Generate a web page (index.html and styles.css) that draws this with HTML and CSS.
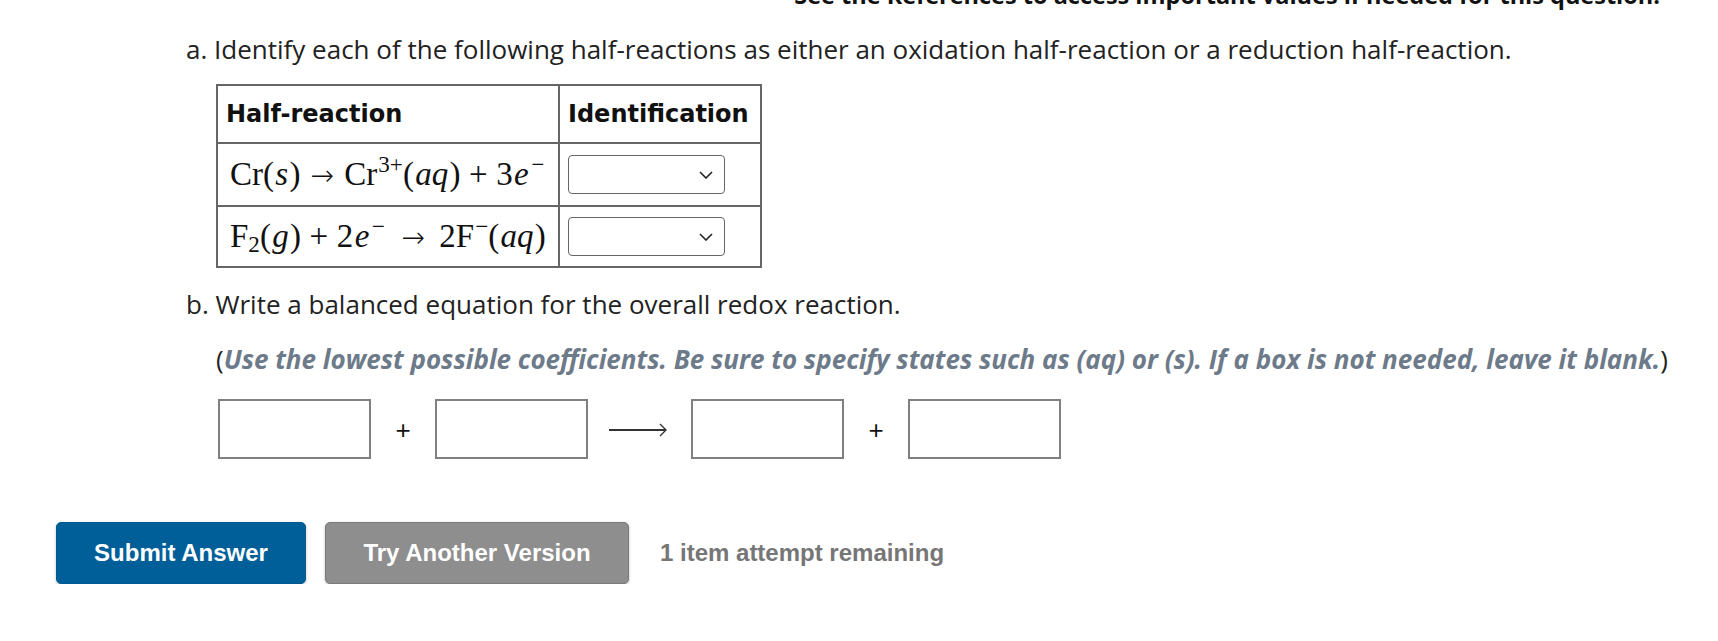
FILE: index.html
```html
<!DOCTYPE html>
<html lang="en">
<head>
<meta charset="utf-8">
<title>Redox question</title>
<link rel="stylesheet" href="styles.css">
</head>
<body>
<div class="refs">See the References to access important values if needed for this question.</div>
<div class="question">
  <p class="qtext">a. Identify each of the following half-reactions as either an oxidation half-reaction or a reduction half-reaction.</p>
  <table class="hr">
    <thead>
      <tr class="row-head"><th class="c1">Half-reaction</th><th class="c2">Identification</th></tr>
    </thead>
    <tbody>
      <tr class="row-1">
        <td class="c1 math">Cr(<i>s</i>)<span class="rel">→</span>Cr<sup>3+</sup>(<i>aq</i>)<span class="bin">+</span>3<i>e</i><sup>−</sup></td>
        <td class="c2"><div class="sel"><svg class="chev" width="14" height="8" viewBox="0 0 14 8"><path d="M1 1 L7 7 L13 1" fill="none" stroke="#222" stroke-width="1.6"/></svg></div></td>
      </tr>
      <tr class="row-2">
        <td class="c1 math">F<sub>2</sub>(<i>g</i>)<span class="bin">+</span>2<i>e</i><sup>−</sup><span class="rel wide">→</span>2F<sup>−</sup>(<i>aq</i>)</td>
        <td class="c2"><div class="sel"><svg class="chev" width="14" height="8" viewBox="0 0 14 8"><path d="M1 1 L7 7 L13 1" fill="none" stroke="#222" stroke-width="1.6"/></svg></div></td>
      </tr>
    </tbody>
  </table>
  <p class="qtext qb">b. Write a balanced equation for the overall redox reaction.</p>
  <p class="hint">(<em>Use the lowest possible coefficients. Be sure to specify states such as (aq) or (s). If a box is not needed, leave it blank.</em>)</p>
  <div class="eq">
    <div class="box"></div>
    <span class="plus">+</span>
    <div class="box"></div>
    <svg class="arrow" width="59" height="16" viewBox="0 0 59 16"><path d="M0 8 H56" stroke="#333" stroke-width="2.2"/><path d="M51 2 L57 8 L51 14" fill="none" stroke="#333" stroke-width="1.4"/></svg>
    <div class="box"></div>
    <span class="plus">+</span>
    <div class="box"></div>
  </div>
</div>
<div class="actions">
  <button class="btn submit">Submit Answer</button>
  <button class="btn another">Try Another Version</button>
  <span class="remaining">1 item attempt remaining</span>
</div>
</body>
</html>
```
FILE: styles.css
```css
html, body {
  margin: 0;
  padding: 0;
  background: #fff;
}
body {
  font-family: "Open Sans", "Liberation Sans", sans-serif;
  color: #222;
  overflow: hidden;
}
.refs {
  font-family: "Open Sans", sans-serif;
  font-weight: bold;
  font-size: 23.5px;
  line-height: 20px;
  height: 20px;
  margin-top: -15px;
  text-align: right;
  padding-right: 58px;
  color: #111;
  white-space: nowrap;
}
.question {
  padding-left: 186px;
}
.qtext {
  margin: 26px 0 0 0;
  font-size: 26px;
  line-height: 36px;
  color: #222;
  white-space: nowrap;
}
.qb {
  margin-top: 18px;
}
.hr {
  margin: 17px 0 0 30px;
  border-collapse: collapse;
  border: 2px solid #666;
}
.hr th, .hr td {
  border: 2px solid #666;
  padding: 0 8px;
  text-align: left;
  vertical-align: middle;
}
.hr th {
  font-family: "DejaVu Sans", sans-serif;
  font-weight: bold;
  font-size: 24px;
  color: #111;
}
.hr .c1 { width: 320px; }
.hr .c2 { width: 184px; }
.row-head { height: 58px; }
.row-1 { height: 63px; }
.row-2 { height: 61px; }
.math {
  font-family: "Liberation Serif", "DejaVu Serif", serif;
  font-size: 33px;
  color: #111;
  white-space: nowrap;
  padding-left: 12px !important;
}
.math i { font-style: italic; padding: 0 0.04em; }
.math sup {
  font-size: 0.7em;
  vertical-align: 0.55em;
  line-height: 0;
  margin-left: 0.05em;
}
.math sub {
  font-size: 0.7em;
  vertical-align: -0.2em;
  line-height: 0;
}
.rel {
  font-family: "DejaVu Sans", sans-serif;
  font-weight: 200;
  font-size: 0.85em;
  margin: 0 0.36em;
}
.rel.wide { margin: 0 0.5em 0 0.6em; }
.bin { margin: 0 0.26em; }
.sel {
  width: 157px;
  height: 39px;
  box-sizing: border-box;
  border: 1.5px solid #666;
  border-radius: 4px;
  display: flex;
  align-items: center;
  justify-content: flex-end;
  padding-right: 11px;
  background: #fff;
}
.hint {
  margin: 19px 0 0 30px;
  font-size: 26px;
  line-height: 36px;
  color: #222;
  white-space: nowrap;
}
.hint em {
  font-style: italic;
  font-weight: bold;
  color: #6c7a89;
}
.eq {
  margin: 22px 0 0 32px;
  display: flex;
  align-items: center;
}
.box {
  width: 153px;
  height: 60px;
  box-sizing: border-box;
  border: 2px solid #808080;
}
.plus {
  width: 64px;
  text-align: center;
  font-family: "Liberation Sans", sans-serif;
  font-size: 26px;
  color: #111;
  padding-top: 2px;
}
.arrow {
  margin: 2px 23px 0 21px;
}
.actions {
  margin: 63px 0 0 56px;
  display: flex;
  align-items: center;
}
.btn {
  height: 62px;
  border-radius: 5px;
  font-family: "Liberation Sans", sans-serif;
  font-weight: bold;
  font-size: 24px;
  color: #fff;
  box-shadow: 0 1px 3px rgba(0,0,0,0.25);
}
.submit {
  width: 250px;
  background: #005f98;
  border: 1px solid #005a90;
}
.another {
  width: 304px;
  margin-left: 19px;
  background: #8e8e8e;
  border: 1px solid #7a7a7a;
}
.remaining {
  margin-left: 31px;
  font-family: "Liberation Sans", sans-serif;
  font-weight: bold;
  font-size: 24px;
  color: #767676;
}
```
